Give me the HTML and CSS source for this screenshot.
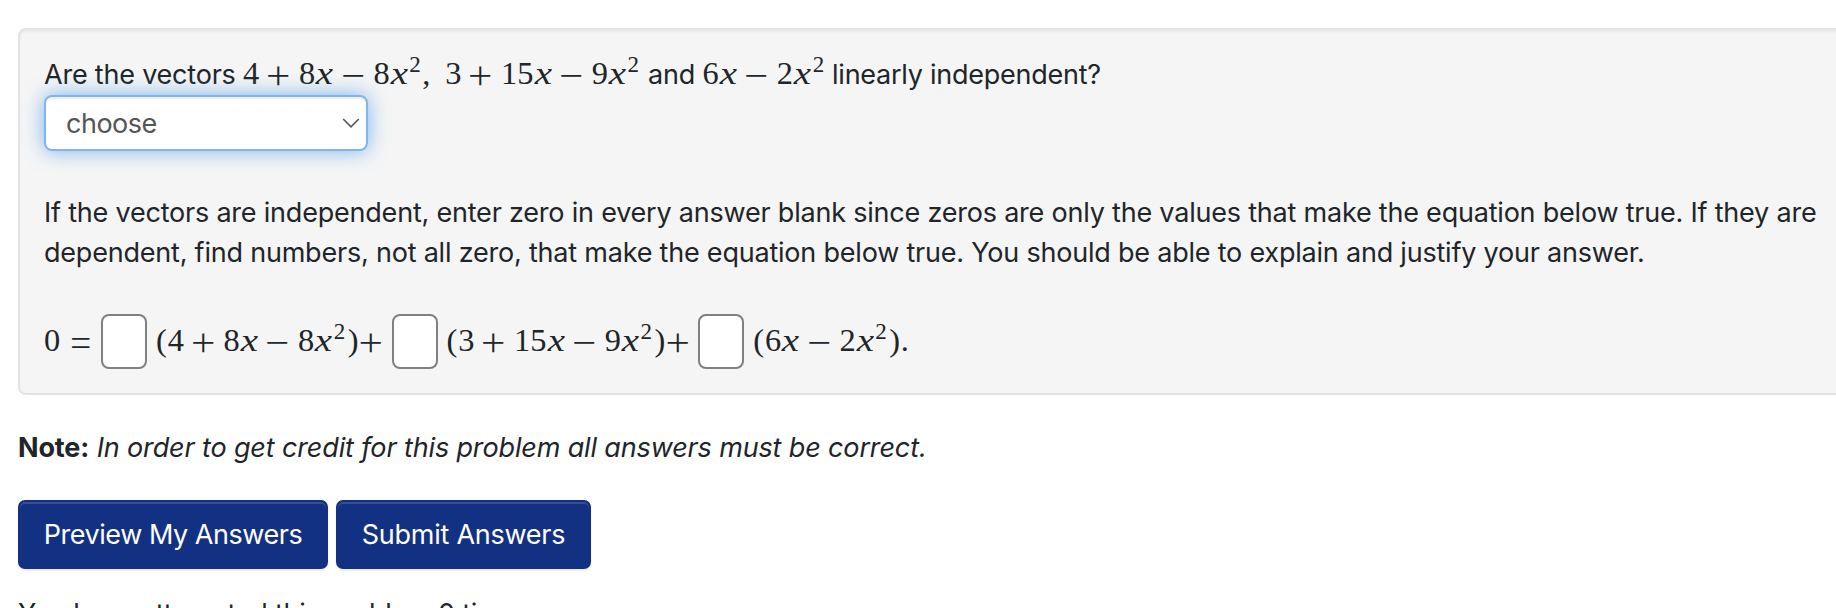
FILE: index.html
```html
<!DOCTYPE html>
<html lang="en">
<head>
    <meta charset="UTF-8">
    <title>Linear independence</title>
    <link rel="stylesheet" href="styles.css">
</head>
<body>
    <form class="problem">
        <div class="problem-content">
            <div class="question">Are the vectors <span class="math">4<span class="op">+</span>8<i>x</i><span class="op">−</span>8<i>x</i><sup>2</sup><span class="comma">,</span>3<span class="op">+</span>15<i>x</i><span class="op">−</span>9<i>x</i><sup>2</sup></span> and <span class="math">6<i>x</i><span class="op">−</span>2<i>x</i><sup>2</sup></span> <span class="tail-text">linearly independent?</span></div>

            <div class="select-wrap">
                <select class="answer-select">
                    <option>choose</option>
                    <option>linearly dependent</option>
                    <option>linearly independent</option>
                </select>
                <svg class="chevron" width="18" height="12" viewBox="0 0 18 12"><path d="M1.2 2 9 9.8 16.8 2" fill="none" stroke="#555" stroke-width="1.6"/></svg>
            </div>

            <p class="explain">If the vectors are independent, enter zero in every answer blank since zeros are only the values that make the equation below true. If they are<br>
            dependent, find numbers, not all zero, that make the equation below true. You should be able to explain and justify your answer.</p>

            <div class="equation">
                <span class="math">0<span class="op rel">=</span></span>
                <input class="blank" type="text">
                <span class="math"><b>(</b>4<span class="op">+</span>8<i>x</i><span class="op">−</span>8<i>x</i><sup>2</sup><b>)</b><span class="op tail">+</span></span>
                <input class="blank" type="text">
                <span class="math"><b>(</b>3<span class="op">+</span>15<i>x</i><span class="op">−</span>9<i>x</i><sup>2</sup><b>)</b><span class="op tail">+</span></span>
                <input class="blank" type="text">
                <span class="math"><b>(</b>6<i>x</i><span class="op">−</span>2<i>x</i><sup>2</sup><b>)</b>.</span>
            </div>
        </div>

        <p class="note"><strong>Note:</strong> <em>In order to get credit for this problem all answers must be correct.</em></p>

        <div class="buttons">
            <button class="btn preview" type="button">Preview My Answers</button>
            <button class="btn submit" type="button">Submit Answers</button>
        </div>

        <p class="attempts">You have attempted this problem 0 times.</p>
    </form>
</body>
</html>
```
FILE: styles.css
```css
* { box-sizing: border-box; }
html { overflow: hidden; }
body { margin: 0; height: 608px; overflow: hidden; background: #fff; color: #212529; font-family: Inter, "Liberation Sans", sans-serif; font-size: 27px; line-height: 40px; letter-spacing: -0.21px; }
p { margin: 0; }
.problem { padding: 28px 0 0 18px; width: 1880px; }
.problem-content { height: 367px; padding: 25px 24px 24px; border: 2px solid #e3e3e3; border-radius: 8px; background: #f5f5f5; box-shadow: inset 0 2px 2px rgba(0,0,0,0.05); }
.question { height: 40px; white-space: nowrap; }
.tail-text { letter-spacing: -0.25px; margin-left: -1px; }

/* math */
.math { font-family: "Liberation Serif", serif; font-size: 32.4px; line-height: 0; letter-spacing: 0; white-space: nowrap; }
.math i { display: inline-block; width: 18.6px; text-align: center; transform: scaleX(1.2); }
.math b { display: inline-block; width: 12.6px; text-align: center; font-weight: 400; }
.math sup { display: inline-block; width: 14px; padding-left: 1px; font-size: 23px; line-height: 0; vertical-align: 12px; }
.op { display: inline-block; width: 39.7px; text-align: center; font-family: Inter, sans-serif; font-size: 43px; font-weight: 150; line-height: 0; vertical-align: -3.5px; text-indent: -1px; transform: scaleX(1.08); }
.op.tail { width: 25.2px; text-indent: -2px; }
.op.rel { width: 25.2px; margin-left: 8.7px; text-indent: -2px; }
.comma { display: inline-block; width: 23px; }

.select-wrap { display: grid; width: 324px; height: 56px; }
.answer-select { grid-area: 1 / 1; appearance: none; margin: 0; padding: 2px 20px 0; border: 2px solid #80b5ee; border-radius: 8px; outline: 0; background: #fff; color: #555; font: inherit; letter-spacing: -0.5px; box-shadow: inset 0 2px 2px rgba(0,0,0,0.075), 0 0 20px rgba(82,156,236,0.75); }
.chevron { grid-area: 1 / 1; align-self: center; justify-self: end; margin-right: 8px; pointer-events: none; }

.explain { margin-top: 42px; white-space: nowrap; }
.equation { display: flex; align-items: center; height: 55px; margin-top: 41px; }
.equation .math { margin-bottom: 3px; line-height: 40px; }
.equation .op, .equation sup, .equation i, .equation b { line-height: 0; }
.blank { width: 46px; height: 55px; margin: 0 8px 0 7px; padding: 0; border: 2px solid #808080; border-radius: 8px; background: #fff; }

.note { margin-top: 33px; letter-spacing: -0.14px; }
.buttons { display: flex; gap: 8px; margin-top: 32px; }
.btn { height: 69px; padding: 0; border: 2px solid #133182; border-radius: 7px; background: #133182; color: #fff; font: inherit; letter-spacing: -0.45px; white-space: nowrap; box-shadow: inset 0 2px 0 rgba(255,255,255,0.15), 0 2px 2px rgba(0,0,0,0.075); }
.preview { width: 310px; }
.submit { width: 255px; letter-spacing: -0.25px; }
.attempts { margin-top: 25px; }
```
